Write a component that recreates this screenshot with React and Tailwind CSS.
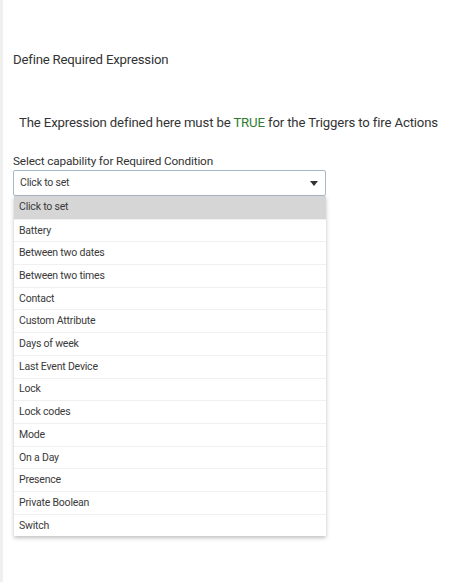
const OPTIONS = [
  'Click to set',
  'Battery',
  'Between two dates',
  'Between two times',
  'Contact',
  'Custom Attribute',
  'Days of week',
  'Last Event Device',
  'Lock',
  'Lock codes',
  'Mode',
  'On a Day',
  'Presence',
  'Private Boolean',
  'Switch',
];

export default function App() {
  return (
    <div className="flex min-h-[582px] bg-white text-[#333]" style={{ fontFamily: 'Roboto, "Liberation Sans", sans-serif' }}>
      {/* left gutter strip */}
      <div className="w-[3px] shrink-0 bg-[#efefef]" />

      <div className="flex-1 pl-[10px]">
        <h1 className="pt-[51px] text-[13.2px] leading-[18px] tracking-[-0.2px] font-normal text-[#333]">Define Required Expression</h1>

        <p className="mt-[44px] pl-[6px] text-[13.2px] leading-[20px] tracking-[-0.15px] text-[#333]">
          The Expression defined here must be <span className="text-[#2e7d32]">TRUE</span> for the Triggers to fire Actions
        </p>

        <label className="mt-[20px] block text-[11.8px] leading-[16px] tracking-[-0.15px] text-[#333]">Select capability for Required Condition</label>

        {/* select box */}
        <div className="mt-[1px] flex h-[26px] w-[313px] items-center justify-between rounded-[2px] border border-[#a9b8c9] bg-white pl-[6px] pr-[6px]">
          <span className="text-[10.5px] tracking-[-0.2px] text-[#3a3a3a]">Click to set</span>
          <svg width="8" height="5" viewBox="0 0 8 5" className="mr-[1px]">
            <path d="M0 0 L8 0 L4 5 Z" fill="#333" />
          </svg>
        </div>

        {/* open dropdown list */}
        <ul className="ml-[1px] w-[312px] bg-white shadow-[0_2px_4px_rgba(0,0,0,0.25)]">
          {OPTIONS.map((o, i) => (
            <li
              key={o}
              className={
                'flex h-[22.7px] items-center pl-[5px] text-[10.5px] tracking-[-0.2px] text-[#3a3a3a] ' +
                (i === 0 ? 'bg-[#d6d6d6]' : 'border-t border-[#f0f0f0]')
              }
            >
              {o}
            </li>
          ))}
        </ul>
      </div>
    </div>
  );
}
